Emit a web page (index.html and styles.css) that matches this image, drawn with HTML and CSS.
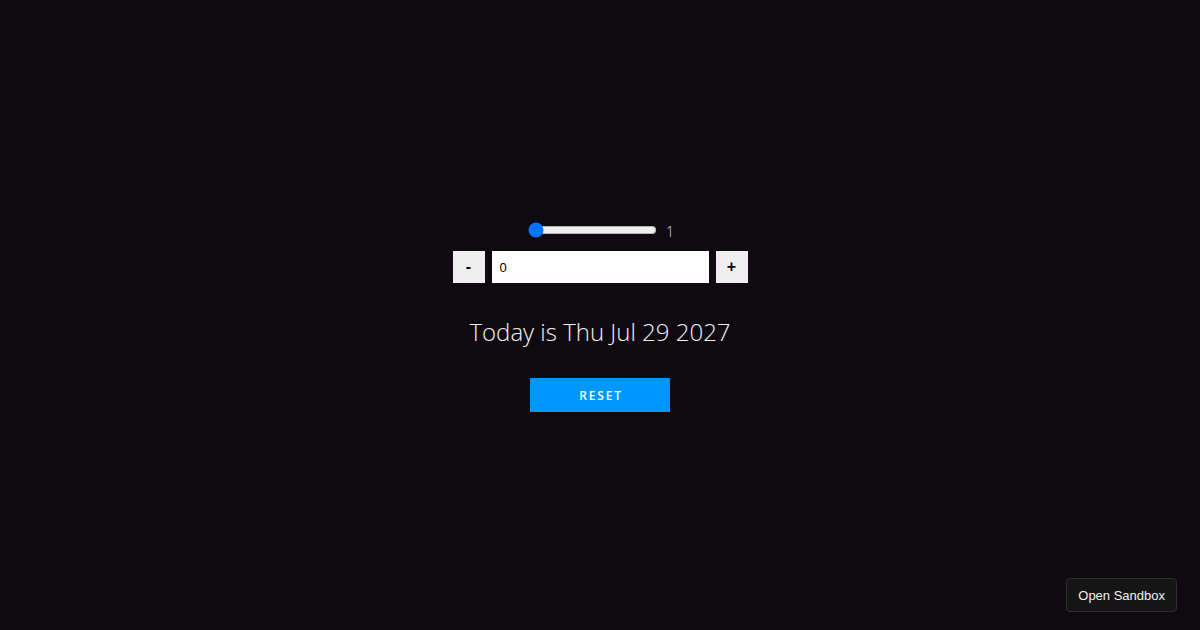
FILE: index.html
```html
<!DOCTYPE html>
<html>
<head>
<meta charset="utf-8">
<link rel="stylesheet" href="styles.css">
</head>
<body>
<main class="app">
  <div class="slider-row">
    <input class="range" type="range" min="1" max="10" value="1">
    <span class="range-value">1</span>
  </div>
  <div class="counter">
    <button class="step">-</button>
    <input class="count" type="text" value="0">
    <button class="step">+</button>
  </div>
  <p class="today">Today is Thu Jul 29 2027</p>
  <button class="reset">RESET</button>
</main>
<button class="sandbox">Open Sandbox</button>
</body>
</html>
```
FILE: styles.css
```css
html, body {
  margin: 0;
  height: 100%;
}
body {
  background: #0f0a10;
  color: #e8e8e8;
  font-family: "Open Sans", "DejaVu Sans", sans-serif;
}
.app {
  box-sizing: border-box;
  height: 100%;
  padding-top: 2px;
  display: flex;
  flex-direction: column;
  align-items: center;
  justify-content: center;
}
.slider-row {
  display: flex;
  align-items: center;
  gap: 7px;
  height: 20px;
}
.range {
  width: 129px;
  margin: 2px;
}
.range-value {
  font-size: 15px;
  font-weight: 300;
  color: #d0d0d0;
  padding-top: 2px;
}
.counter {
  display: flex;
  gap: 7px;
  margin-top: 11px;
}
.step {
  width: 32px;
  height: 32px;
  border: none;
  background: #efefef;
  color: #000;
  font-family: "Liberation Sans", Arial, sans-serif;
  font-weight: bold;
  font-size: 16px;
  padding: 0;
}
.count {
  width: 217px;
  height: 32px;
  box-sizing: border-box;
  border: none;
  background: #fff;
  padding: 0 8px;
  font-family: "Liberation Sans", Arial, sans-serif;
  font-size: 13px;
  color: #000;
}
.today {
  margin: 33px 0 0;
  font-size: 24px;
  font-weight: 300;
  line-height: 32px;
  color: #f0f0f0;
}
.reset {
  margin-top: 30px;
  width: 140px;
  height: 34px;
  border: none;
  background: #0096ff;
  color: #fff;
  font-family: "Open Sans", sans-serif;
  font-weight: 600;
  font-size: 12px;
  letter-spacing: 1.8px;
  padding: 0 0 0 2px;
}
.sandbox {
  position: fixed;
  right: 23px;
  bottom: 18px;
  height: 34px;
  padding: 0 11px;
  background: #161516;
  border: 1px solid #2f2f2f;
  border-radius: 4px;
  color: #f0f0f0;
  font-family: "Liberation Sans", Arial, sans-serif;
  font-size: 13px;
}
```
